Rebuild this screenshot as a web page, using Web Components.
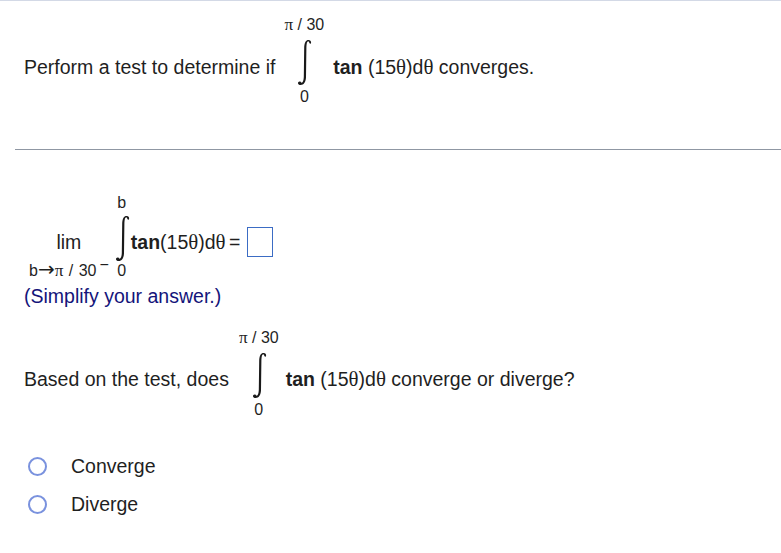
<!DOCTYPE html>
<html>
<head>
<meta charset="utf-8">
<style>
  html, body { margin: 0; padding: 0; background: #fff; }
  body { font: 19.5px "Liberation Sans", Arial, sans-serif; color: #1f1f1f; overflow: hidden; }
</style>
</head>
<body>
<question-page></question-page>
<script>
"use strict";

const GREEK = '"Liberation Serif", "Times New Roman", serif';

class MathIntegral extends HTMLElement {
    constructor() {
        super();
        this.attachShadow({ mode: 'open' });
    }

    connectedCallback() {
        this.shadowRoot.innerHTML = `
            <style>
                :host { display: inline-flex; flex-direction: column; align-items: center; font-size: 16px; min-width: 16px; }
                .limit { line-height: 18px; height: 18px; white-space: nowrap; }
                svg { display: block; margin: calc(var(--int-gap, 4px) + 1px) 0 calc(var(--int-gap, 4px) - 1px); }
            </style>
            <div class="limit"><slot name="upper"></slot></div>
            <svg width="16" height="46" viewBox="0 0 16 46">
                <path d="M14.8 4.4 C15.6 3.4 15 1.2 12.8 1 C10 0.8 8.6 3.4 8.2 8 L7.8 38 C7.6 41.5 7 43.4 5.6 43.8 C5.2 43.9 5 43 4.2 42.6 C3 42.2 2 43 2 44.2 C2 45.4 3.2 46 4.6 46 C7.8 46 9.6 43.6 10 38.6 L10.4 8 C10.6 4.4 11 2.4 12.2 2.2 C12.8 2.2 13 3 13.4 4 C13.8 4.8 14.4 4.9 14.8 4.4 Z" fill="#1a1a1a"/>
            </svg>
            <div class="limit"><slot name="lower"></slot></div>
        `;
    }
}

class TextRow extends HTMLElement {
    constructor() {
        super();
        this.attachShadow({ mode: 'open' });
    }

    connectedCallback() {
        this.shadowRoot.innerHTML = `
            <style>
                :host { display: flex; align-items: center; white-space: nowrap; }
            </style>
            <slot></slot>
        `;
    }
}

class AnswerBox extends HTMLElement {
    constructor() {
        super();
        this.attachShadow({ mode: 'open' });
    }

    connectedCallback() {
        this.shadowRoot.innerHTML = `
            <style>
                :host { display: inline-block; width: 24px; height: 28px; border: 1px solid #3b6cc4; background: #fff; }
            </style>
        `;
    }
}

class RadioOption extends HTMLElement {
    constructor() {
        super();
        this.attachShadow({ mode: 'open' });
    }

    connectedCallback() {
        this.shadowRoot.innerHTML = `
            <style>
                :host { display: flex; align-items: center; height: 38px; gap: 24px; padding-left: 28px; }
                .dot { width: 15px; height: 15px; border: 2.5px solid #7a92de; border-radius: 50%; box-sizing: content-box; flex: none; }
            </style>
            <span class="dot"></span>
            <span><slot></slot></span>
        `;
    }
}

class QuestionPage extends HTMLElement {
    constructor() {
        super();
        this.attachShadow({ mode: 'open' });
    }

    connectedCallback() {
        this.shadowRoot.innerHTML = `
            <style>
                :host { display: block; width: 781px; height: 553px; box-sizing: border-box; border-top: 1px solid #d3d9e6; }
                i { font-family: ${GREEK}; font-style: normal; font-size: 1.07em; }
                .arrow { font-family: "DejaVu Sans", sans-serif; font-size: 20px; line-height: 0; }
                .head { height: 148px; padding: 15px 0 43px 24px; box-sizing: border-box; }
                hr { margin: 0 0 0 15px; border: 0; height: 1px; background: #8f97a3; }
                .limit-block { padding: 44px 0 0 24px; }
                .limit-row { align-items: flex-start; }
                .lim { display: flex; flex-direction: column; align-items: center; margin: 37px 0 0 5px; font-size: 16px; }
                .lim .top { font-size: 19.5px; line-height: 22px; margin: 0 0 9px 0; }
                .lim .bottom { line-height: 18px; white-space: nowrap; word-spacing: 1px; }
                .lim sup { font-size: 16px; line-height: 0; margin-left: 3px; }
                .limit-text { line-height: 22px; margin: 37px 0 0 1px; }
                .eq { margin-left: -2px; }
                .hint { color: #14147a; line-height: 24px; margin-top: 4px; }
                .based { padding: 21px 0 0 24px; }
                .options { padding-top: 28px; }
                .tan { font-weight: bold; }
                .shift { margin-top: 12px; }
            </style>
            <text-row class="head">
                <span class="shift">Perform a test to determine if</span>
                <math-integral style="margin-left:9px">
                    <span slot="upper"><i>π</i> / 30</span>
                    <span slot="lower">0</span>
                </math-integral>
                <span class="shift" style="margin-left:9px"><b class="tan">tan</b> (15<i>θ</i>)d<i>θ</i> converges.</span>
            </text-row>
            <hr>
            <div class="limit-block">
                <text-row class="limit-row">
                    <div class="lim">
                        <span class="top">lim</span>
                        <span class="bottom">b<span class="arrow">→</span><i>π</i> / 30<sup>−</sup></span>
                    </div>
                    <math-integral style="--int-gap:2px;margin-left:5px">
                        <span slot="upper">b</span>
                        <span slot="lower">0</span>
                    </math-integral>
                    <span class="limit-text"><b class="tan">tan</b>(15<i>θ</i>)d<i>θ</i> <span class="eq">=</span></span>
                    <answer-box style="margin:33px 0 0 7px"></answer-box>
                </text-row>
                <div class="hint">(Simplify your answer.)</div>
            </div>
            <text-row class="based">
                <span style="margin-top:10px">Based on the test, does</span>
                <math-integral style="margin-left:10px">
                    <span slot="upper"><i>π</i> / 30</span>
                    <span slot="lower">0</span>
                </math-integral>
                <span style="margin:10px 0 0 7px"><b class="tan">tan</b> (15<i>θ</i>)d<i>θ</i> converge or diverge?</span>
            </text-row>
            <div class="options">
                <radio-option>Converge</radio-option>
                <radio-option>Diverge</radio-option>
            </div>
        `;
    }
}

customElements.define('math-integral', MathIntegral);
customElements.define('text-row', TextRow);
customElements.define('answer-box', AnswerBox);
customElements.define('radio-option', RadioOption);
customElements.define('question-page', QuestionPage);
</script>
</body>
</html>
